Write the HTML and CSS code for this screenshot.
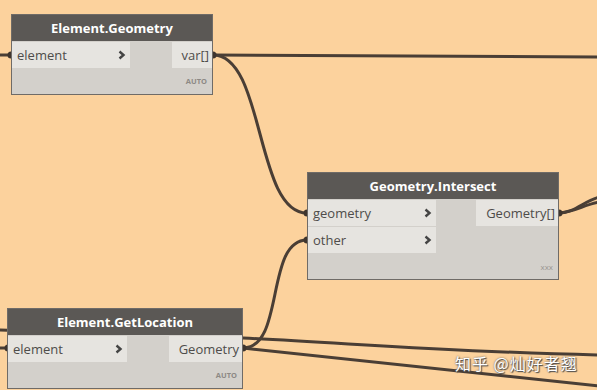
FILE: index.html
```html
<!DOCTYPE html>
<html lang="zh-CN">
<head>
    <meta charset="UTF-8">
    <title>Dynamo</title>
    <link rel="stylesheet" href="styles.css">
</head>
<body>
    <div class="canvas">
        <svg class="wires" width="597" height="390" viewBox="0 0 597 390">
            <g fill="none" stroke="#4a3e35" stroke-width="3" stroke-linecap="round">
                <path d="M0,55 L11,55"/>
                <path d="M213,55 C400,55 500,56 600,57"/>
                <path d="M213,55 C265,55 255,213 307,213"/>
                <path d="M243,348 C285,348 265,240 307,240"/>
                <path d="M559,213 C575,213 585,200 600,197"/>
                <path d="M559,213 C575,212 585,204 600,202"/>
                <path d="M0,330 C100,333 200,336 243,338 C350,343 450,352 600,355"/>
                <path d="M243,348 C270,350 400,365 600,386"/>
                <path d="M0,348 L8,348"/>
            </g>
            <g fill="#3f352e">
                <circle cx="11" cy="55" r="3.5"/>
                <circle cx="213" cy="55" r="3.5"/>
                <circle cx="307" cy="213" r="3.5"/>
                <circle cx="307" cy="240" r="3.5"/>
                <circle cx="559" cy="213" r="3.5"/>
                <circle cx="8" cy="348" r="3.5"/>
                <circle cx="243" cy="348" r="3.5"/>
            </g>
        </svg>

        <div class="node node-geometry">
            <div class="node-title">Element.Geometry</div>
            <div class="node-body">
                <div class="inputs">
                    <div class="port in">element<svg class="chev" viewBox="0 0 8 10"><path d="M1.5,1.5 L5.5,5 L1.5,8.5"/></svg></div>
                </div>
                <div class="outputs">
                    <div class="port out">var[]</div>
                </div>
            </div>
            <div class="node-foot">AUTO</div>
        </div>

        <div class="node node-intersect">
            <div class="node-title">Geometry.Intersect</div>
            <div class="node-body">
                <div class="inputs">
                    <div class="port in">geometry<svg class="chev" viewBox="0 0 8 10"><path d="M1.5,1.5 L5.5,5 L1.5,8.5"/></svg></div>
                    <div class="port in">other<svg class="chev" viewBox="0 0 8 10"><path d="M1.5,1.5 L5.5,5 L1.5,8.5"/></svg></div>
                </div>
                <div class="outputs">
                    <div class="port out">Geometry[]</div>
                </div>
            </div>
            <div class="node-foot light">xxx</div>
        </div>

        <div class="node node-location">
            <div class="node-title">Element.GetLocation</div>
            <div class="node-body">
                <div class="inputs">
                    <div class="port in">element<svg class="chev" viewBox="0 0 8 10"><path d="M1.5,1.5 L5.5,5 L1.5,8.5"/></svg></div>
                </div>
                <div class="outputs">
                    <div class="port out">Geometry</div>
                </div>
            </div>
            <div class="node-foot">AUTO</div>
        </div>

        <div class="watermark">知乎 @灿好者翘</div>
    </div>
</body>
</html>
```

FILE: styles.css
```css
body {
    margin: 0;
    background-color: #fcd29d;
    font-family: 'Open Sans', 'Noto Sans', sans-serif;
}
.canvas {
    position: relative;
    width: 597px;
    height: 390px;
    overflow: hidden;
}
.wires {
    position: absolute;
    left: 0;
    top: 0;
}
.node {
    position: absolute;
    display: flex;
    flex-direction: column;
    background-color: #d3d0cb;
    border: 1px solid #6f6b67;
    box-sizing: border-box;
}
.node-geometry {
    left: 11px;
    top: 14px;
    width: 202px;
}
.node-intersect {
    left: 307px;
    top: 172px;
    width: 252px;
}
.node-location {
    left: 7px;
    top: 308px;
    width: 236px;
}
.node-title {
    height: 26px;
    line-height: 26px;
    background-color: #5b5855;
    color: #fff;
    font-weight: bold;
    font-size: 13px;
    text-align: center;
}
.node-body {
    display: flex;
    justify-content: space-between;
    padding-top: 1px;
}
.inputs,
.outputs {
    display: flex;
    flex-direction: column;
    gap: 1px;
}
.node-geometry .inputs { width: 118px; }
.node-geometry .outputs { width: 40px; }
.node-intersect .inputs { width: 128px; }
.node-intersect .outputs { width: 82px; }
.node-location .inputs { width: 119px; }
.node-location .outputs { width: 73px; }
.port {
    height: 26px;
    display: flex;
    align-items: center;
    background-color: #e6e4e0;
    color: #4e4c4a;
    font-size: 13px;
}
.port.in {
    justify-content: space-between;
    padding: 0 4px 0 5px;
}
.port.out {
    justify-content: flex-end;
    padding-right: 3px;
}
.chev {
    width: 8px;
    height: 10px;
}
.chev path {
    fill: none;
    stroke: #444;
    stroke-width: 2.4;
}
.node-foot {
    height: 26px;
    display: flex;
    align-items: center;
    justify-content: flex-end;
    padding-right: 5px;
    font-size: 7.5px;
    font-weight: bold;
    color: #8d8985;
}
.node-foot.light {
    font-weight: normal;
    font-size: 8px;
    color: #9a9692;
}
.watermark {
    position: absolute;
    left: 455px;
    top: 351px;
    font-family: 'Noto Sans CJK SC', sans-serif;
    font-size: 16px;
    letter-spacing: 1px;
    color: #fff;
    text-shadow: 0 0 2px #555, 1px 1px 1px #444;
}
```
